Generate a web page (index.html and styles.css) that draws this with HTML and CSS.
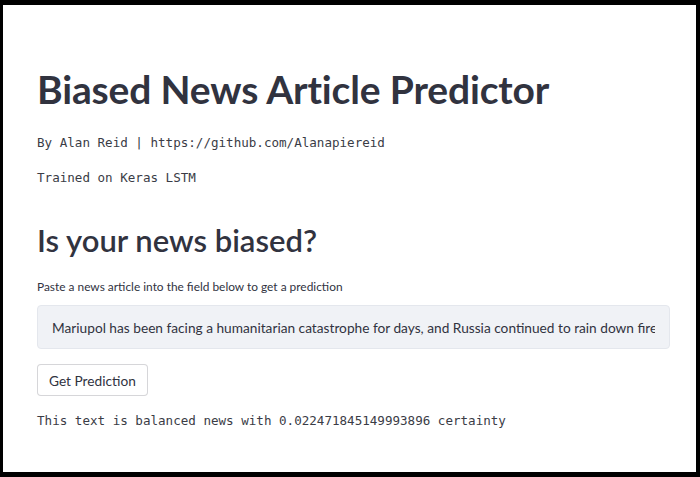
FILE: index.html
```html
<!DOCTYPE html>
<html lang="en">
<head>
<meta charset="utf-8">
<title>Biased News Article Predictor</title>
<link rel="stylesheet" href="styles.css">
</head>
<body>
<main class="page">
  <h1 class="title">Biased News Article Predictor</h1>
  <p class="mono by">By Alan Reid | https://github.com/Alanapiereid</p>
  <p class="mono trained">Trained on Keras LSTM</p>
  <h2 class="subtitle">Is your news biased?</h2>
  <label class="label" for="article">Paste a news article into the field below to get a prediction</label>
  <div class="input-wrap">
    <input id="article" class="input" type="text" value="Mariupol has been facing a humanitarian catastrophe for days, and Russia continued to rain down fire on the city">
  </div>
  <div class="btn-row"><button class="btn" type="button">Get Prediction</button></div>
  <p class="mono result">This text is balanced news with 0.022471845149993896 certainty</p>
</main>
</body>
</html>
```
FILE: styles.css
```css
html {
  background: #000;
  height: 100%;
}
body {
  margin: 0;
  height: 100%;
  box-sizing: border-box;
  border-style: solid;
  border-color: #000;
  border-width: 5px 4px 5px 3px;
  background: #fff;
  color: #31333f;
  font-family: Lato, "Liberation Sans", sans-serif;
  overflow: hidden;
}
.page {
  display: flex;
  flex-direction: column;
  padding: 60px 26px 0 34px;
}
.title {
  margin: 0;
  font-size: 39px;
  line-height: 48px;
  font-weight: 700;
  letter-spacing: -0.15px;
}
.mono {
  margin: 0;
  font-family: "DejaVu Sans Mono", monospace;
  font-size: 12.57px;
  line-height: 20px;
  white-space: pre;
  color: #3a3c46;
}
.by { margin-top: 20px; }
.trained { margin-top: 15px; }
.subtitle {
  margin: 32px 0 0;
  font-size: 31px;
  line-height: 40px;
  font-weight: 600;
}
.label {
  margin-top: 18px;
  font-size: 11.9px;
  line-height: 18px;
}
.input-wrap {
  margin-top: 9px;
  display: flex;
}
.input {
  flex: 1;
  min-width: 0;
  height: 44px;
  box-sizing: border-box;
  margin: 0;
  padding: 0 14px;
  border: 1px solid #e4e7ed;
  border-radius: 4px;
  background: #f0f2f6;
  color: #31333f;
  font-family: Lato, "Liberation Sans", sans-serif;
  font-size: 13.7px;
  outline: none;
}
.btn-row {
  margin-top: 15px;
  display: flex;
}
.btn {
  height: 32px;
  box-sizing: border-box;
  padding: 0 11px;
  border: 1px solid rgba(49, 51, 63, 0.2);
  border-radius: 4px;
  background: #fff;
  color: #31333f;
  font-family: Lato, "Liberation Sans", sans-serif;
  font-size: 13.7px;
}
.result { margin-top: 15px; }
```
